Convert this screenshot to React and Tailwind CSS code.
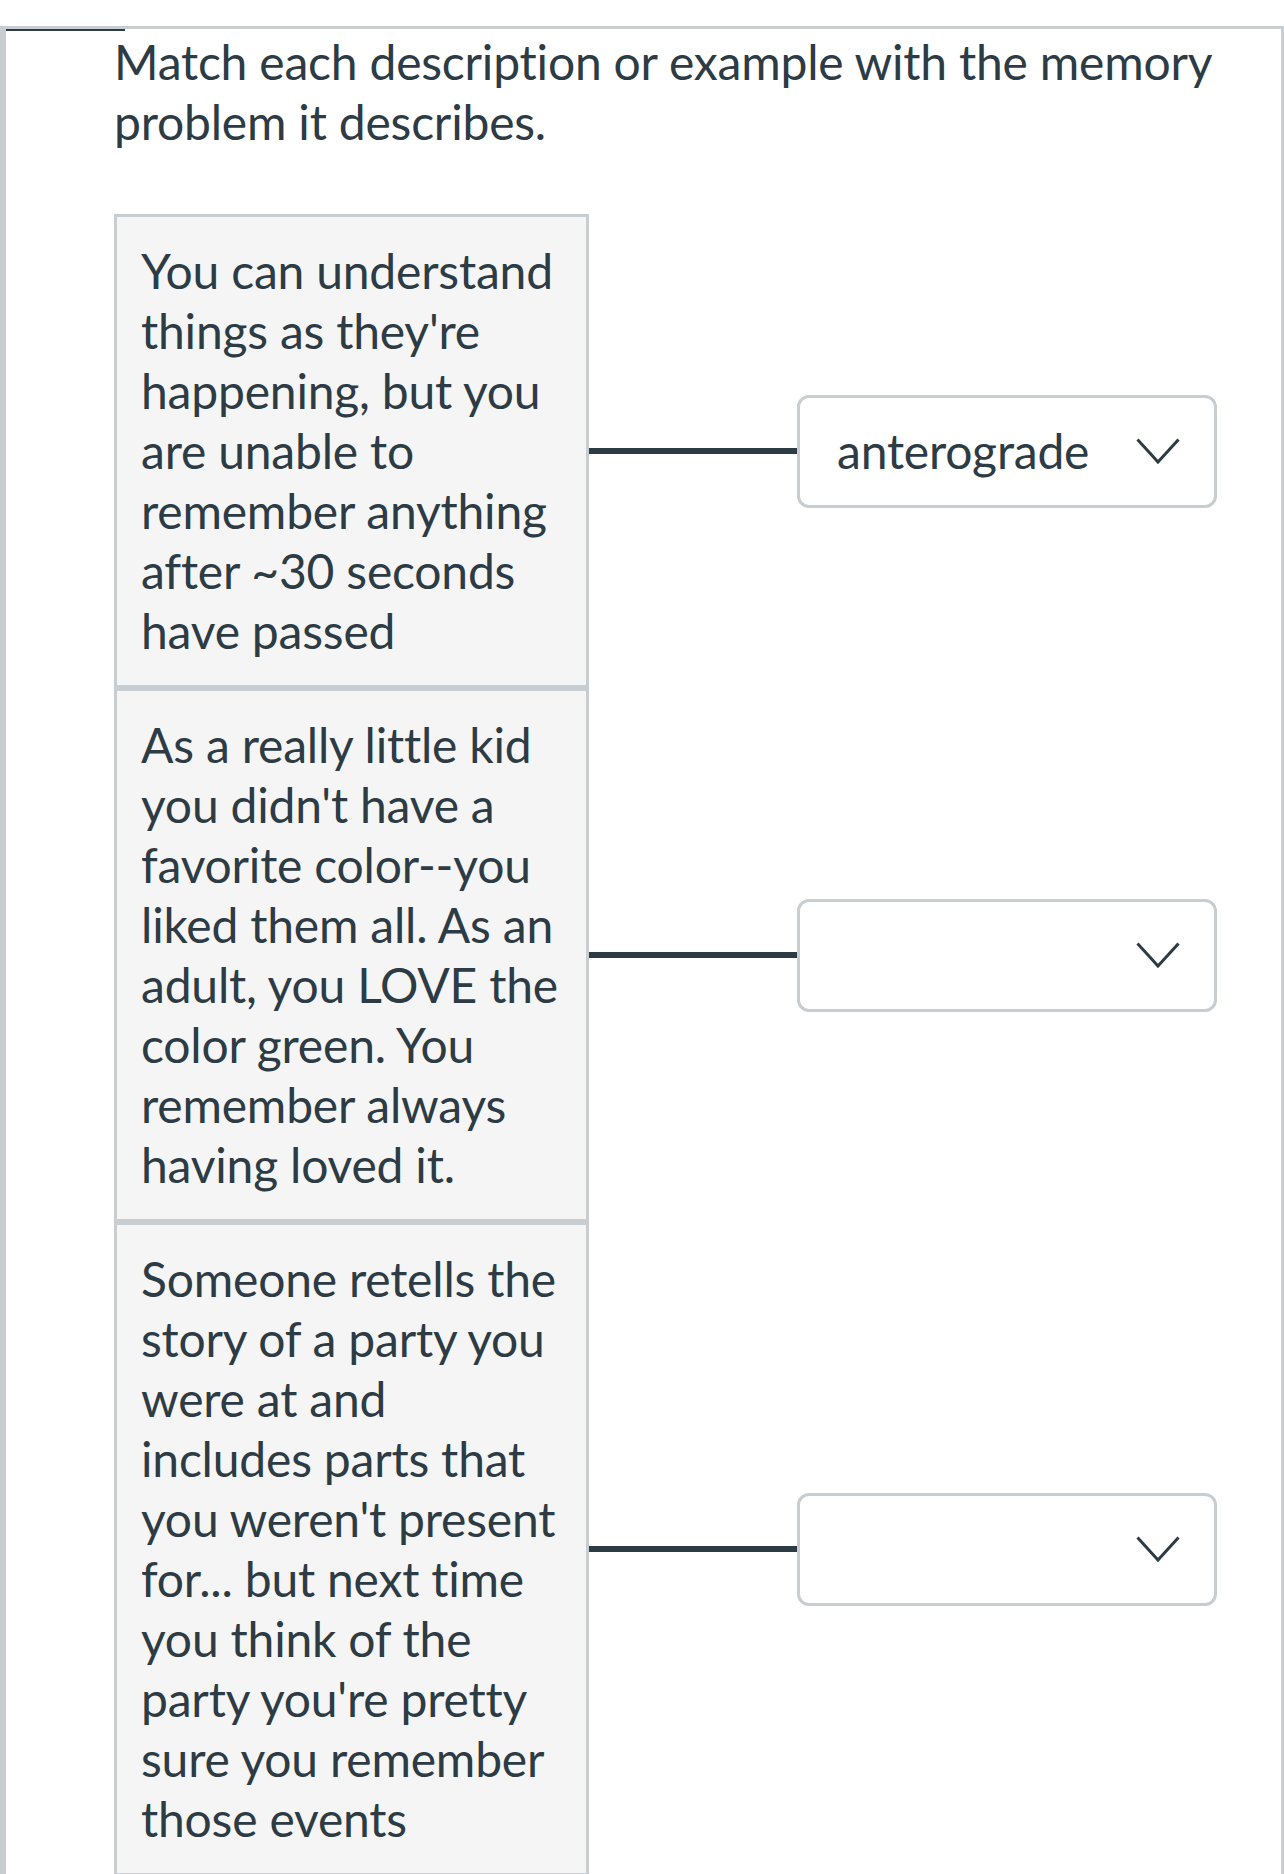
import React from "react";

const items = [
  {
    lines: [
      "You can understand",
      "things as they're",
      "happening, but you",
      "are unable to",
      "remember anything",
      "after ~30 seconds",
      "have passed",
    ],
    value: "anterograde",
  },
  {
    lines: [
      "As a really little kid",
      "you didn't have a",
      "favorite color--you",
      "liked them all. As an",
      "adult, you LOVE the",
      "color green. You",
      "remember always",
      "having loved it.",
    ],
    value: "",
  },
  {
    lines: [
      "Someone retells the",
      "story of a party you",
      "were at and",
      "includes parts that",
      "you weren't present",
      "for... but next time",
      "you think of the",
      "party you're pretty",
      "sure you remember",
      "those events",
    ],
    value: "",
  },
];

function Chevron() {
  return (
    <svg width="44" height="26" viewBox="0 0 44 26" fill="none" className="shrink-0">
      <polyline points="1.5,1.5 22,24 42.5,1.5" stroke="#2d3b45" strokeWidth="3" strokeLinejoin="miter" />
    </svg>
  );
}

export default function App() {
  return (
    <div className="min-h-screen bg-white pt-[26px] font-['Lato',sans-serif] tracking-[-0.2px] text-[#2d3b45]">
      <div className="border-t-[3px] border-l-[6px] border-r-[3px] border-[#c7cdd1]">
        <div className="h-[2px] w-[119px] bg-[#2d3b45]" />
        <div className="pl-[108px] pr-[64px]">
          <p className="pt-[1px] text-[48px] leading-[60px] whitespace-nowrap">
            Match each description or example with the memory
            <br />
            problem it describes.
          </p>
          <div className="mt-[62px] flex flex-col">
            {items.map((it, i) => (
              <div key={i} className="flex items-center">
                <div className="w-[475px] shrink-0 self-stretch border-[3px] border-[#c7cdd1] bg-[#f5f5f5] py-[24px] pl-[24px] pr-[16px] text-[48px] leading-[60px] whitespace-nowrap">
                  {it.lines.map((l, j) => (
                    <div key={j}>{l}</div>
                  ))}
                </div>
                <div className="h-[6px] w-[208px] shrink-0 bg-[#2d3b45]" />
                <div className="flex h-[113px] w-[420px] shrink-0 items-center justify-between rounded-[12px] border-[3px] border-[#c7cdd1] bg-white pl-[37px] pr-[34px]">
                  <span className="text-[48px] leading-[60px]">{it.value}</span>
                  <Chevron />
                </div>
              </div>
            ))}
          </div>
        </div>
      </div>
    </div>
  );
}
